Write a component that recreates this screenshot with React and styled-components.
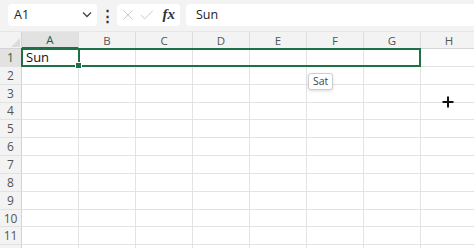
import styled, { createGlobalStyle } from 'styled-components'

const GlobalStyle = createGlobalStyle`
  html, body { margin: 0; padding: 0; background: #fff; }
  body { font-family: "Open Sans", "Noto Sans", sans-serif; overflow: hidden; }
`

const COLS = ['A', 'B', 'C', 'D', 'E', 'F', 'G', 'H']
const ROWS = [1, 2, 3, 4, 5, 6, 7, 8, 9, 10, 11, 12]
const COL_W = 57
const ROW_H = 17.85

function App() {
  return (
    <Page>
      <GlobalStyle />
      <Toolbar>
        <NameBox>
          <span>A1</span>
          <svg width="10" height="7" viewBox="0 0 10 7">
            <path d="M1 1.5 L5 5.5 L9 1.5" fill="none" stroke="#444" strokeWidth="1.3" />
          </svg>
        </NameBox>
        <Dots>⋮</Dots>
        <FxBox>
          <svg width="14" height="14" viewBox="0 0 14 14">
            <path d="M1.5 1.5 L12.5 12.5 M12.5 1.5 L1.5 12.5" stroke="#c4c4c4" strokeWidth="1.1" />
          </svg>
          <svg width="16" height="14" viewBox="0 0 16 14">
            <path d="M1 7 L5.5 11.5 L15 2" fill="none" stroke="#c4c4c4" strokeWidth="1.1" />
          </svg>
          <Fx>fx</Fx>
        </FxBox>
        <FormulaInput>Sun</FormulaInput>
      </Toolbar>
      <Sheet>
        <Corner>
          <svg width="12" height="12" viewBox="0 0 12 12">
            <path d="M11 2 L11 11 L2 11 Z" fill="#dcdcdc" />
          </svg>
        </Corner>
        {COLS.map((c) => (
          <ColHead key={c} $active={c === 'A'}>{c}</ColHead>
        ))}
        {ROWS.map((r) => [
          <RowHead key={'h' + r} $active={r === 1}>{r < 12 ? r : ''}</RowHead>,
          ...COLS.map((c) => (
            <Cell key={c + r}>{r === 1 && c === 'A' ? 'Sun' : ''}</Cell>
          )),
        ])}
        <Selection />
        <ActiveCell>
          <Handle />
        </ActiveCell>
        <Tip>Sat</Tip>
        <Cursor>
          <svg width="12" height="12" viewBox="0 0 12 12">
            <path d="M6 0.5 V11.5 M0.5 6 H11.5" stroke="#111" strokeWidth="2" />
          </svg>
        </Cursor>
      </Sheet>
    </Page>
  )
}

export default App

const Page = styled.div`
  width: 474px;
  height: 248px;
  overflow: hidden;
  background: #fff;
`

const Toolbar = styled.div`
  height: 32px;
  box-sizing: border-box;
  background: #f3f3f3;
  border-bottom: 1px solid #e6e6e6;
  display: flex;
  align-items: center;
  padding: 0 0 2px 8px;
`

const NameBox = styled.div`
  width: 89px;
  height: 22px;
  box-sizing: border-box;
  background: #fff;
  border-radius: 4px;
  display: flex;
  align-items: center;
  justify-content: space-between;
  padding: 0 5px 0 6px;
  font-size: 12.5px;
  color: #222;
`

const Dots = styled.div`
  width: 20px;
  text-align: center;
  font-size: 15px;
  color: #333;
  font-weight: 700;
`

const FxBox = styled.div`
  width: 63px;
  height: 22px;
  box-sizing: border-box;
  background: #fff;
  border-radius: 4px;
  display: flex;
  align-items: center;
  padding: 0 5px;
  gap: 6px;
`

const Fx = styled.span`
  font-family: "Liberation Serif", serif;
  font-style: italic;
  font-weight: 700;
  font-size: 15px;
  color: #333;
  margin-left: 3px;
`

const FormulaInput = styled.div`
  flex: 1;
  height: 22px;
  margin-left: 6px;
  box-sizing: border-box;
  background: #fff;
  border-radius: 4px 0 0 4px;
  display: flex;
  align-items: center;
  padding-left: 10px;
  font-size: 12.5px;
  color: #222;
`

const Sheet = styled.div`
  position: relative;
  display: grid;
  grid-template-columns: 22px repeat(8, ${COL_W}px);
  grid-template-rows: 17px repeat(12, ${ROW_H}px);
`

const Corner = styled.div`
  background: #f3f3f3;
  border-right: 1px solid #d4d4d4;
  border-bottom: 1px solid #d4d4d4;
  box-sizing: border-box;
  display: flex;
  align-items: flex-end;
  justify-content: flex-end;
`

const ColHead = styled.div`
  box-sizing: border-box;
  background: ${(p) => (p.$active ? '#e2e2e2' : '#f3f3f3')};
  border-right: 1px solid #dedede;
  border-bottom: ${(p) => (p.$active ? '2px solid #1e7145' : '1px solid #d4d4d4')};
  color: ${(p) => (p.$active ? '#1f5e3a' : '#555')};
  display: flex;
  align-items: center;
  justify-content: center;
  font-size: 11.5px;
`

const RowHead = styled.div`
  box-sizing: border-box;
  background: ${(p) => (p.$active ? '#e2e2e2' : '#f3f3f3')};
  border-right: 1px solid #d4d4d4;
  border-bottom: 1px solid #e2e2e2;
  color: ${(p) => (p.$active ? '#1f5e3a' : '#555')};
  display: flex;
  align-items: center;
  justify-content: center;
  font-size: 12px;
`

const Cell = styled.div`
  box-sizing: border-box;
  border-right: 1px solid #e3e3e3;
  border-bottom: 1px solid #e3e3e3;
  display: flex;
  align-items: center;
  padding-left: 4px;
  font-size: 13px;
  color: #111;
`

const Selection = styled.div`
  position: absolute;
  left: 21px;
  top: 16px;
  width: ${COL_W * 7 + 1}px;
  height: 19px;
  box-sizing: border-box;
  border: 2px solid #1e7145;
  pointer-events: none;
`

const ActiveCell = styled.div`
  position: absolute;
  left: 21px;
  top: 16px;
  width: 59px;
  height: 19px;
  box-sizing: border-box;
  border: 2px solid #1e7145;
`

const Handle = styled.div`
  position: absolute;
  right: -4px;
  bottom: -4px;
  width: 5px;
  height: 5px;
  background: #1e7145;
  border: 1px solid #fff;
`

const Tip = styled.div`
  position: absolute;
  left: 308px;
  top: 41px;
  padding: 0 4px;
  height: 15px;
  line-height: 15px;
  background: #fff;
  border: 1px solid #cfcfcf;
  border-radius: 3px;
  box-shadow: 0 1px 3px rgba(0, 0, 0, 0.15);
  font-size: 10.5px;
  color: #444;
`

const Cursor = styled.div`
  position: absolute;
  left: 442px;
  top: 59px;
  width: 12px;
  height: 12px;
`
